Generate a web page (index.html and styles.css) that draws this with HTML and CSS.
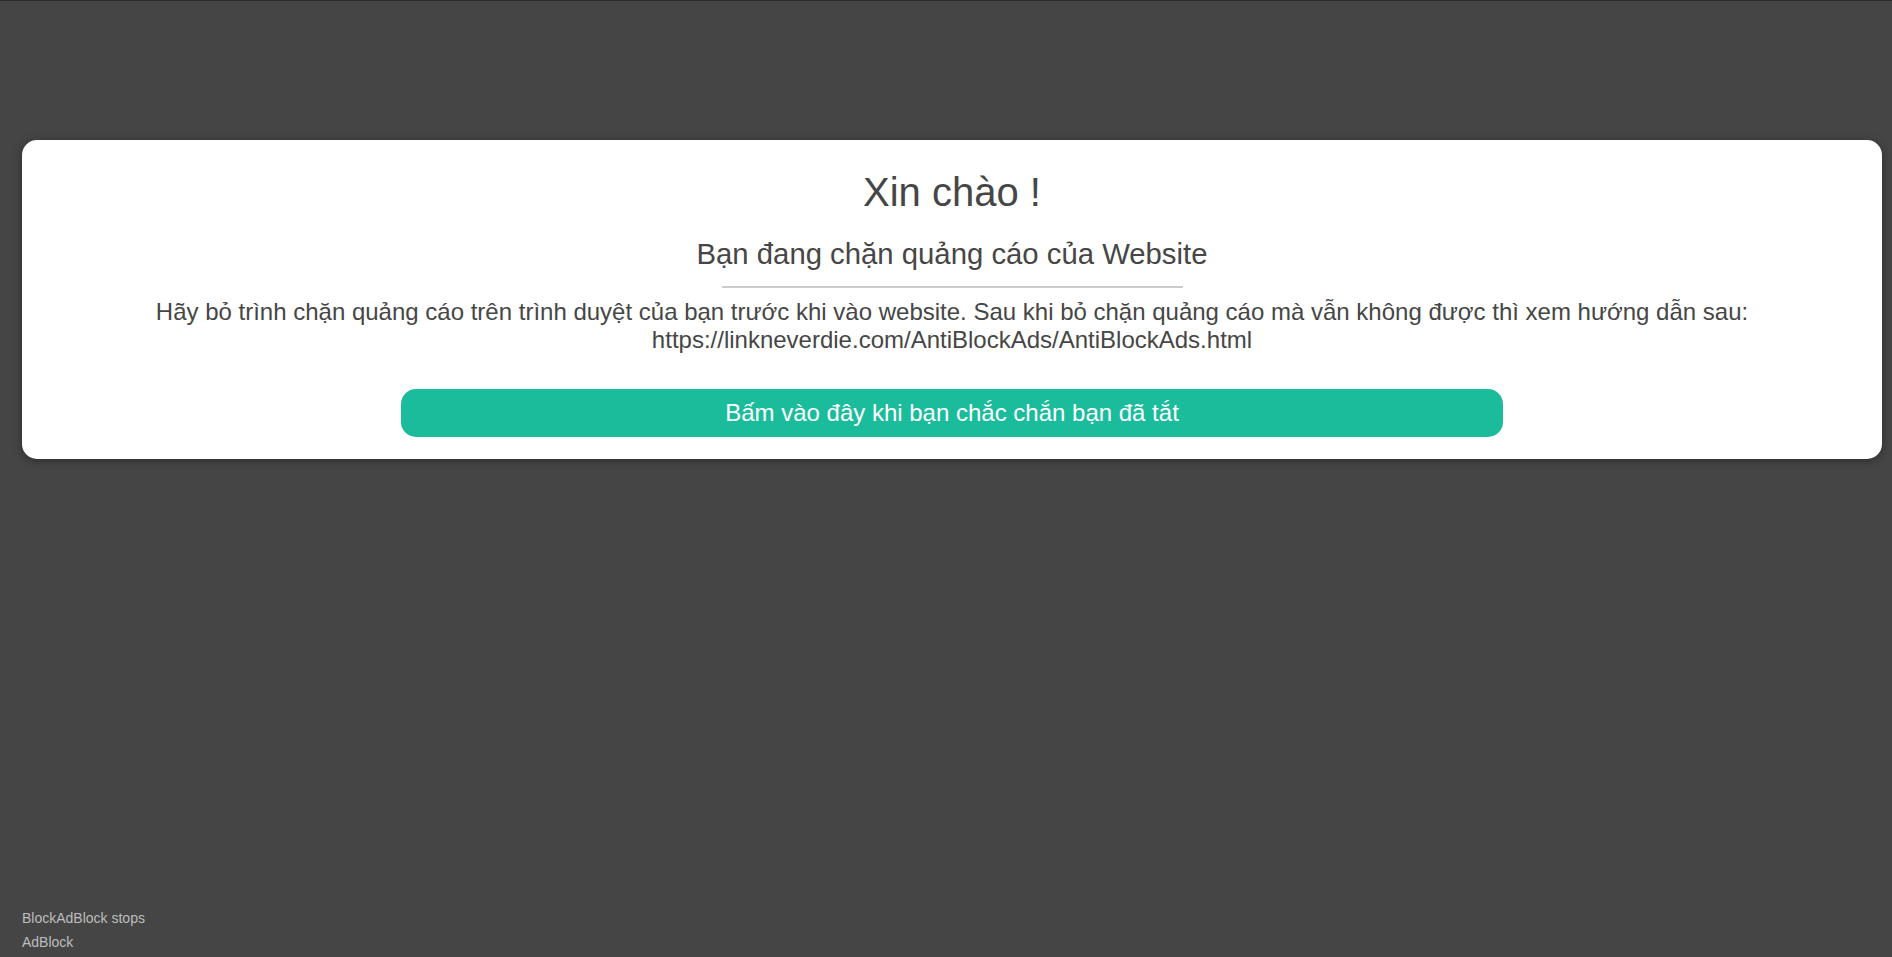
FILE: index.html
```html
<!DOCTYPE html>
<html lang="vi">
<head>
<meta charset="utf-8">
<title>AdBlock</title>
<link rel="stylesheet" href="styles.css">
</head>
<body>
<div class="page">
  <div class="card">
    <h1 class="title">Xin chào !</h1>
    <h2 class="subtitle">Bạn đang chặn quảng cáo của Website</h2>
    <div class="divider"></div>
    <p class="message">Hãy bỏ trình chặn quảng cáo trên trình duyệt của bạn trước khi vào website. Sau khi bỏ chặn quảng cáo mà vẫn không được thì xem hướng dẫn sau: https://linkneverdie.com/AntiBlockAds/AntiBlockAds.html</p>
    <button class="confirm">Bấm vào đây khi bạn chắc chắn bạn đã tắt</button>
  </div>
  <div class="footer">
    <div class="footer-line">BlockAdBlock stops</div>
    <div class="footer-line">AdBlock</div>
  </div>
</div>
</body>
</html>
```
FILE: styles.css
```css
html, body {
  margin: 0;
  padding: 0;
}
body {
  background: #454545;
  font-family: "Liberation Sans", Arial, sans-serif;
  border-top: 1px solid #2c2c2c;
}
.page {
  min-height: calc(100vh - 1px);
  display: flex;
  flex-direction: column;
  box-sizing: border-box;
  padding: 139px 10px 3px 22px;
}
.card {
  background: #ffffff;
  border-radius: 15px;
  box-shadow: 0 2px 10px rgba(0, 0, 0, 0.35);
  padding: 30px 20px 22px;
  display: flex;
  flex-direction: column;
  align-items: center;
  color: #464646;
}
.title {
  margin: 0;
  font-size: 40px;
  line-height: 45px;
  font-weight: normal;
}
.subtitle {
  margin: 22px 0 0;
  font-size: 29.3px;
  line-height: 34px;
  font-weight: normal;
}
.divider {
  width: 461px;
  height: 2px;
  background: #cccccc;
  margin-top: 15px;
}
.message {
  margin: 10px 0 0;
  font-size: 24px;
  line-height: 28px;
  text-align: center;
}
.confirm {
  margin-top: 35px;
  width: 1102px;
  height: 48px;
  border: none;
  border-radius: 15px;
  background: #1bbc9c;
  color: #ffffff;
  font-family: "Liberation Sans", Arial, sans-serif;
  font-size: 24px;
  cursor: pointer;
}
.footer {
  margin-top: auto;
  color: #bdbdbd;
  font-size: 14px;
  line-height: 24px;
}
```
